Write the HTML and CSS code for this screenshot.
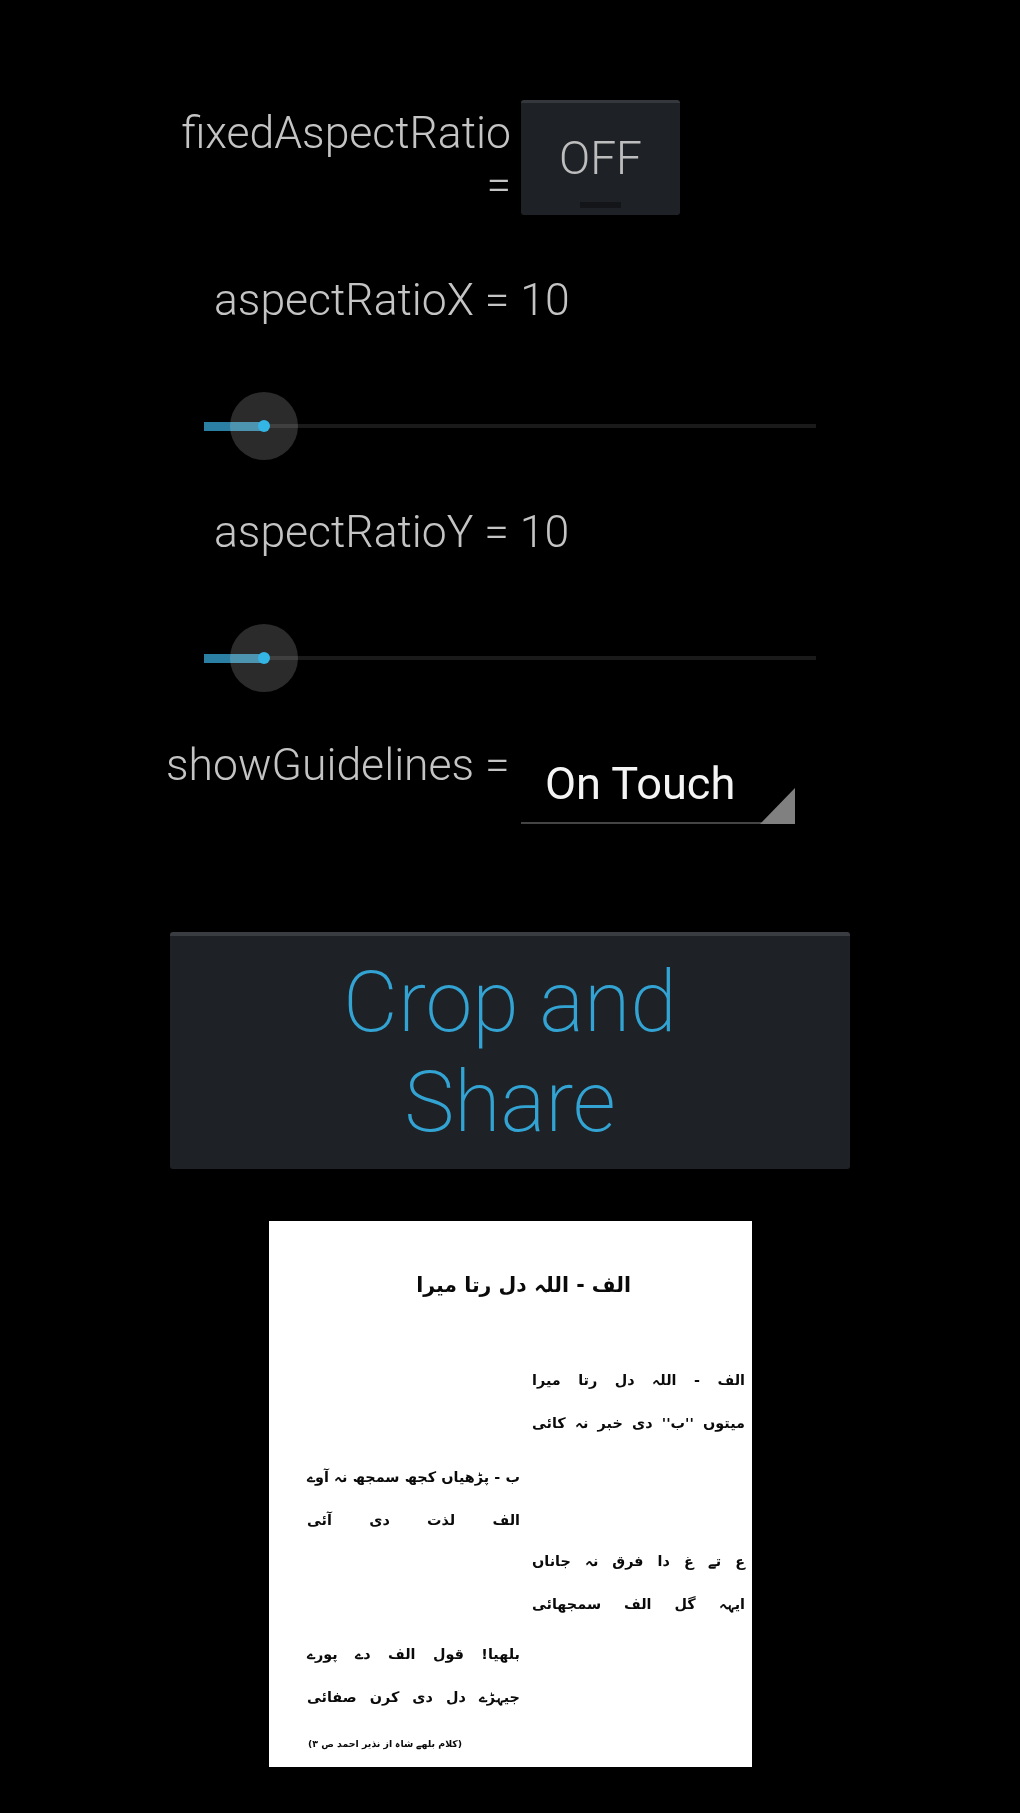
FILE: index.html
```html
<!DOCTYPE html>
<html lang="en">
<head>
<meta charset="utf-8">
<title>Crop settings</title>
<link rel="stylesheet" href="styles.css">
</head>
<body>
<main class="app">
  <div class="toggle-row">
    <div class="toggle-label">fixedAspectRatio =</div>
    <div class="toggle"><span class="toggle-text">OFF</span><span class="toggle-bar"></span></div>
  </div>
  <div class="ratio-label first">aspectRatioX = 10</div>
  <div class="slider">
    <div class="slider-track"><div class="slider-fill"></div></div>
    <div class="slider-halo"><span class="slider-dot"></span></div>
  </div>
  <div class="ratio-label second">aspectRatioY = 10</div>
  <div class="slider">
    <div class="slider-track"><div class="slider-fill"></div></div>
    <div class="slider-halo"><span class="slider-dot"></span></div>
  </div>
  <div class="guide-row">
    <div class="guide-label">showGuidelines =</div>
    <div class="spinner">
      <span class="spinner-text">On Touch</span>
      <svg class="spinner-arrow" viewBox="0 0 35 36" aria-hidden="true"><polygon points="0,36 35,0 35,36"/></svg>
    </div>
  </div>
  <div class="crop-button">Crop and<br>Share</div>
  <div class="poem" dir="rtl">
    <div class="poem-title">الف - اللہ دل رتا میرا</div>
    <div class="stanza right s1"><p>الف - اللہ دل رتا میرا</p><p>میتوں ''ب'' دی خبر نہ کائی</p></div>
    <div class="stanza left s2"><p>ب - پڑھیاں کجھ سمجھ نہ آوے</p><p>الف لذت دی آئی</p></div>
    <div class="stanza right s3"><p>ع تے غ دا فرق نہ جاناں</p><p>ایہہ گل الف سمجھائی</p></div>
    <div class="stanza left s4"><p>بلھیا! قول الف دے پورے</p><p>جیہڑے دل دی کرن صفائی</p></div>
    <div class="poem-credit">(کلام بلھے شاہ از نذیر احمد ص ۳)</div>
  </div>
</main>
</body>
</html>
```
FILE: styles.css
```css
* { box-sizing: border-box; }
html, body { margin: 0; background: #000; }
body { width: 1020px; height: 1813px; overflow: hidden; font-family: Roboto, "Noto Sans", sans-serif; }
.app { display: flex; flex-direction: column; align-items: flex-start; padding-top: 100px; }

.toggle-row { display: flex; gap: 10px; height: 115px; margin-left: 171px; }
.toggle-label { width: 340px; padding-top: 7px; text-align: right; font-size: 44.5px; font-weight: 300; line-height: 52px; color: #c4c4c4; filter: blur(.4px); }
.toggle { width: 159px; height: 115px; background: #1e2226; border-top: 3px solid #34383c; border-radius: 3px; display: flex; flex-direction: column; align-items: center; }
.toggle-text { font-size: 46px; font-weight: 300; line-height: 54px; margin-top: 28px; color: #bdbdbd; filter: blur(.4px); }
.toggle-bar { width: 41px; height: 6px; margin-top: 17px; background: #131518; }

.ratio-label { margin-left: 214px; font-size: 44.5px; font-weight: 300; line-height: 54px; color: #c4c4c4; filter: blur(.4px); }
.ratio-label.first { margin-top: 58px; }
.ratio-label.second { margin-top: 45px; }

.slider { position: relative; width: 612px; height: 68px; margin: 65px 0 0 204px; display: flex; align-items: center; }
.slider-track { width: 100%; height: 4px; background: #1a1a1a; display: flex; align-items: center; }
.slider-fill { width: 60px; height: 9px; flex: none; background: #2a7fa2; }
.slider-halo { position: absolute; left: 26px; top: 0; width: 68px; height: 68px; border-radius: 50%; background: rgba(255,255,255,.17); display: flex; align-items: center; justify-content: center; }
.slider-dot { width: 12px; height: 12px; border-radius: 50%; background: #33b5e5; }

.guide-row { display: flex; margin: 46px 0 0 166px; }
.guide-label { width: 355px; font-size: 44.5px; font-weight: 300; line-height: 54px; color: #c4c4c4; white-space: nowrap; filter: blur(.4px); }
.spinner { position: relative; width: 274px; height: 86px; border-bottom: 2px solid #444; padding: 19px 0 0 24px; }
.spinner-text { font-size: 45.2px; font-weight: 440; line-height: 54px; color: #f4f4f4; filter: blur(.3px); display: block; }
.spinner-arrow { position: absolute; right: 0; bottom: -2px; width: 35px; height: 36px; fill: #808080; }

.crop-button { width: 680px; height: 237px; margin: 108px 0 0 170px; background: #1e2226; border-top: 4px solid #393c40; border-radius: 3px; color: #33a3d3; font-size: 84.5px; font-weight: 200; line-height: 100px; text-align: center; padding-top: 17px; filter: blur(.3px); }

.poem { width: 483px; height: 546px; margin: 52px 0 0 269px; background: #fff; color: #0a0a0a; font-family: "DejaVu Sans", sans-serif; display: flex; flex-direction: column; align-items: flex-start; padding: 0 7px 0 38px; filter: blur(.5px); }
.poem-title { align-self: flex-start; width: 214px; margin: 45px 114px 0 0; font-size: 20.5px; font-weight: 700; line-height: 38px; white-space: nowrap; text-align: center; }
.stanza { width: 213px; font-size: 14.4px; font-weight: 700; line-height: 43px; }
.stanza p { margin: 0; white-space: nowrap; text-align: justify; text-align-last: justify; }
.stanza.right { align-self: flex-start; }
.stanza.left { align-self: flex-end; }
.s1 { margin-top: 55px; }
.s2 { margin-top: 11px; }
.s3 { margin-top: -2px; }
.s4 { margin-top: 7px; }
.poem-credit { align-self: flex-end; width: 152px; margin: 12px 0 0 3px; font-size: 9.4px; font-weight: 700; line-height: 26px; white-space: nowrap; text-align: justify; text-align-last: justify; }
```
